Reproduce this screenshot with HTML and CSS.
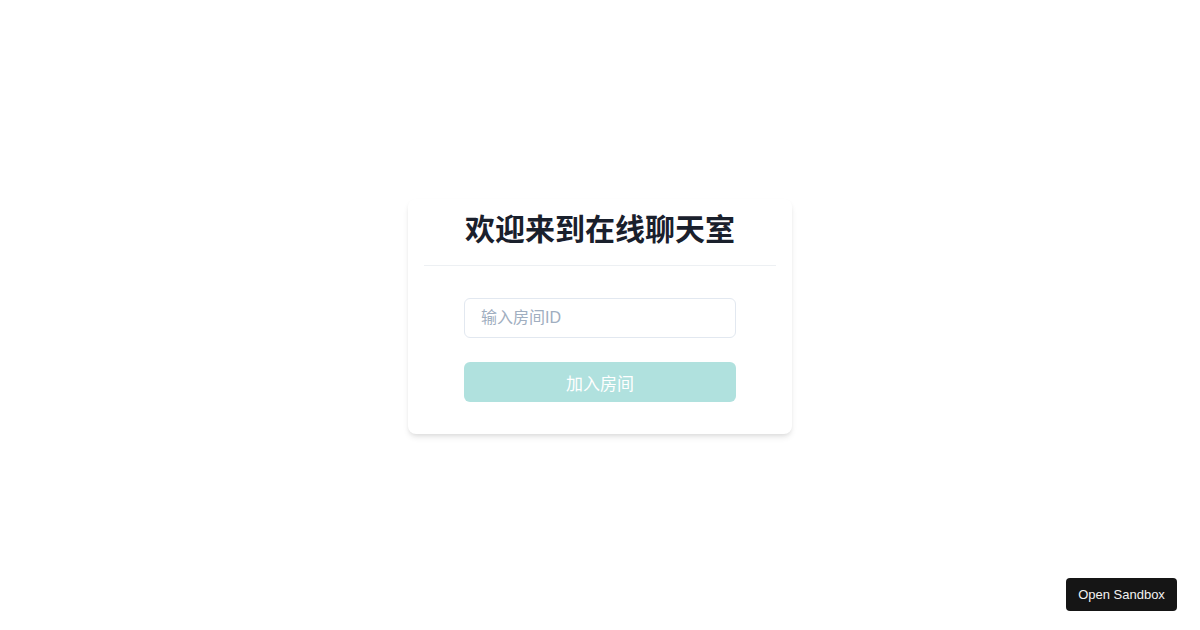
FILE: index.html
```html
<!DOCTYPE html>
<html lang="zh-CN">
<head>
<meta charset="utf-8">
<title>欢迎来到在线聊天室</title>
<link rel="stylesheet" href="styles.css">
</head>
<body>
<main class="page">
  <section class="card">
    <h1 class="card-title">欢迎来到在线聊天室</h1>
    <form class="login-form">
      <input class="id-input" type="text" placeholder="输入房间ID">
      <button class="join-btn" type="button" disabled>加入房间</button>
    </form>
  </section>
</main>
<a class="sandbox-btn" href="#">Open Sandbox</a>
</body>
</html>
```

FILE: styles.css
```css
* { box-sizing: border-box; }
html, body { margin: 0; padding: 0; height: 100%; background: #ffffff; }
body {
  font-family: "Liberation Sans", Arial, "Noto Sans CJK SC", sans-serif;
  color: #1a202c;
}
.page {
  height: 630px;
  display: flex;
  align-items: flex-start;
  justify-content: center;
  padding-top: 199px;
}
.card {
  width: 384px;
  background: #fff;
  border-radius: 8px;
  box-shadow: 0 4px 6px -1px rgba(0,0,0,0.1), 0 2px 4px -1px rgba(0,0,0,0.06);
  padding: 13px 16px 32px;
}
.card-title {
  margin: 0;
  font-size: 30px;
  line-height: 36px;
  font-weight: 700;
  text-align: center;
  color: #1a202c;
  padding-bottom: 17px;
  border-bottom: 1px solid #edf0f3;
  font-family: "Liberation Sans", "Noto Sans CJK SC", sans-serif;
}
.login-form {
  display: flex;
  flex-direction: column;
  gap: 24px;
  padding: 32px 40px 0;
}
.id-input {
  height: 40px;
  width: 100%;
  border: 1px solid #e2e8f0;
  border-radius: 6px;
  padding: 0 16px;
  font-size: 16px;
  font-family: "Liberation Sans", "Noto Sans CJK SC", sans-serif;
  color: #1a202c;
  outline: none;
}
.id-input::placeholder { color: #a0aec0; }
.join-btn {
  height: 40px;
  width: 100%;
  border: none;
  border-radius: 6px;
  background: #b0e1de;
  color: #ffffff;
  font-size: 17px;
  font-family: "Liberation Sans", "Noto Sans CJK SC", sans-serif;
}
.sandbox-btn {
  position: fixed;
  right: 23px;
  bottom: 19px;
  width: 111px;
  height: 33px;
  display: flex;
  align-items: center;
  justify-content: center;
  background: #151515;
  color: #f2f2f2;
  border-radius: 4px;
  font-size: 13px;
  text-decoration: none;
  font-family: "Liberation Sans", Arial, sans-serif;
}
```
